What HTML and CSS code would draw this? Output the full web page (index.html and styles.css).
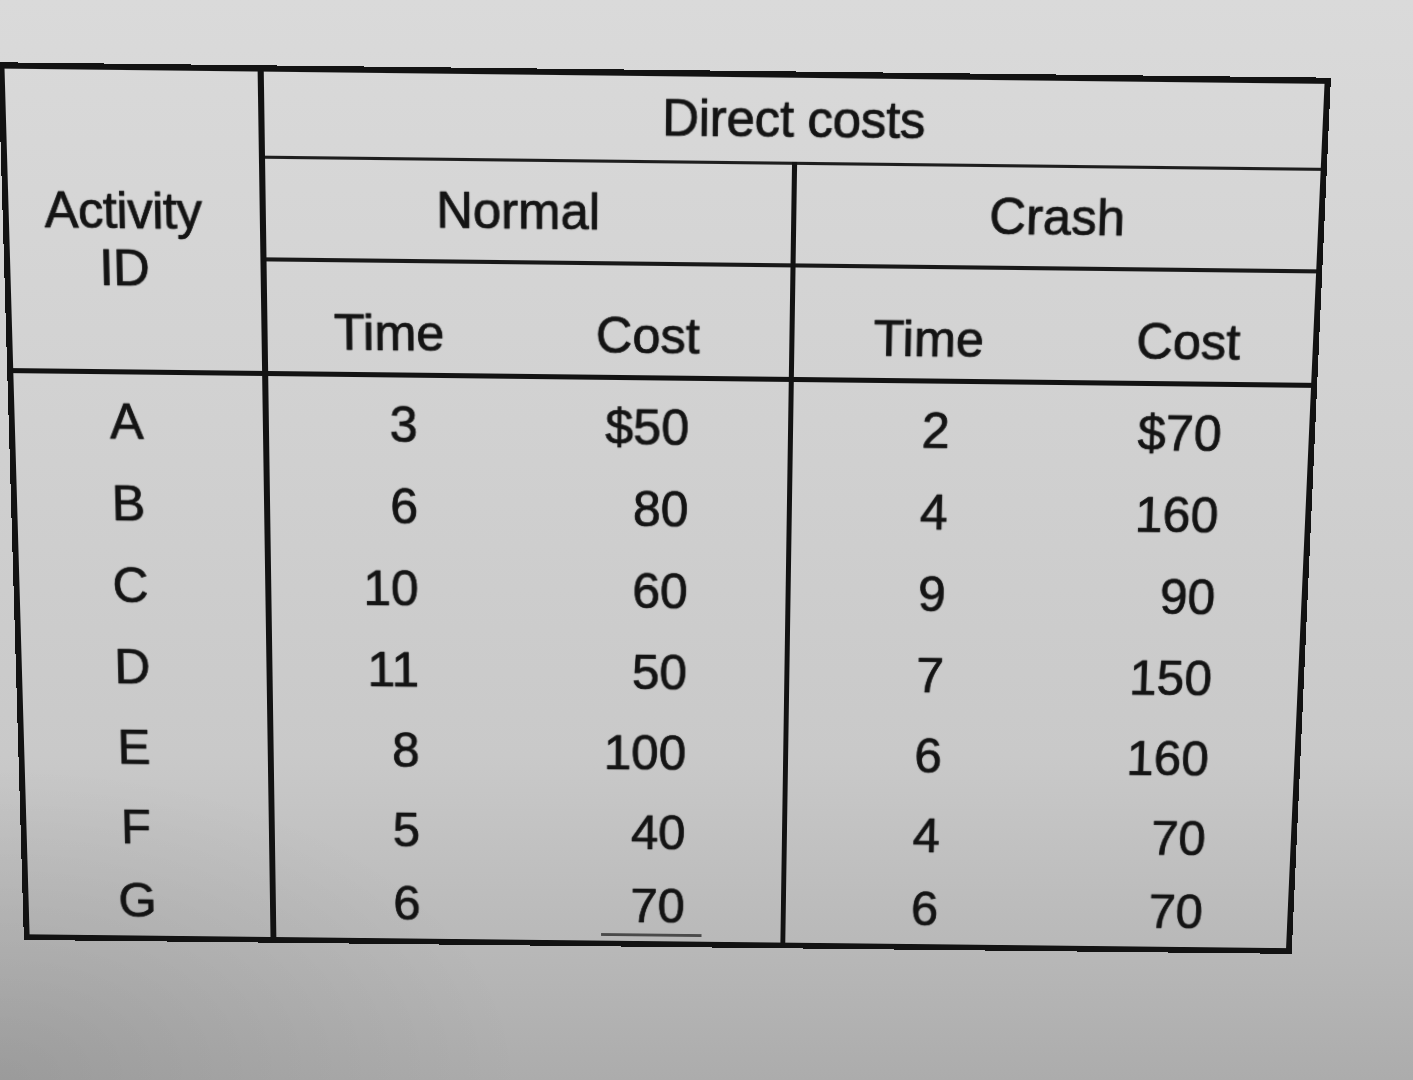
FILE: index.html
```html
<!DOCTYPE html>
<html lang="en">
<head>
<meta charset="utf-8">
<title>Direct costs</title>
<link rel="stylesheet" href="styles.css">
</head>
<body>
<div class="page">
  <table class="costs">
    <colgroup>
      <col class="c-id">
      <col class="c-nt">
      <col class="c-nc">
      <col class="c-ct">
      <col class="c-cc">
    </colgroup>
    <thead>
      <tr class="r1">
        <th class="act" rowspan="3"><span class="act-text">Activity<br>ID</span></th>
        <th class="direct" colspan="4">Direct costs</th>
      </tr>
      <tr class="r2">
        <th class="normal" colspan="2">Normal</th>
        <th class="crash" colspan="2">Crash</th>
      </tr>
      <tr class="r3">
        <th class="h nt">Time</th>
        <th class="h nc">Cost</th>
        <th class="h ct">Time</th>
        <th class="h cc">Cost</th>
      </tr>
    </thead>
    <tbody>
      <tr><td class="id">A</td><td class="nt">3</td><td class="nc">$50</td><td class="ct">2</td><td class="cc">$70</td></tr>
      <tr><td class="id">B</td><td class="nt">6</td><td class="nc">80</td><td class="ct">4</td><td class="cc">160</td></tr>
      <tr><td class="id">C</td><td class="nt">10</td><td class="nc">60</td><td class="ct">9</td><td class="cc">90</td></tr>
      <tr><td class="id">D</td><td class="nt">11</td><td class="nc">50</td><td class="ct">7</td><td class="cc">150</td></tr>
      <tr><td class="id">E</td><td class="nt">8</td><td class="nc">100</td><td class="ct">6</td><td class="cc">160</td></tr>
      <tr><td class="id">F</td><td class="nt">5</td><td class="nc">40</td><td class="ct">4</td><td class="cc">70</td></tr>
      <tr class="last"><td class="id">G</td><td class="nt">6</td><td class="nc"><span class="total">70</span></td><td class="ct">6</td><td class="cc">70</td></tr>
    </tbody>
  </table>
</div>
</body>
</html>
```

FILE: styles.css
```css
html, body {
  margin: 0;
  padding: 0;
}

body {
  width: 1413px;
  height: 1080px;
  overflow: hidden;
  background:
    radial-gradient(ellipse 700px 420px at 0% 100%, rgba(0,0,0,0.10), rgba(0,0,0,0) 75%),
    linear-gradient(180deg, #dadada 0%, #d2d2d2 35%, #c9c9c9 70%, #b8b8b8 88%, #acacac 100%);
  font-family: "Liberation Sans", Arial, Helvetica, sans-serif;
  color: #141414;
}

.page {
  padding: 76px 0 0 11px;
}

.costs {
  width: 1295px;
  table-layout: fixed;
  border-collapse: collapse;
  border: 6px solid #121212;
  transform-origin: 514px 424px;
  transform: perspective(2000px) rotateX(-6.5deg) skewY(0.65deg);
  font-size: 50px;
  line-height: 56px;
  -webkit-text-stroke: 0.7px #1a1a1a;
  text-shadow: 0 0 1.5px rgba(0, 0, 0, 0.55);
}

.c-id { width: 253px; }
.c-nt { width: 266px; }
.c-nc { width: 256px; }
.c-ct { width: 270px; }
.c-cc { width: 250px; }

.costs th,
.costs td {
  padding: 0;
  font-weight: 400;
  white-space: nowrap;
}

.r1 { height: 85px; }
.r2 { height: 100px; }
.r3 { height: 112px; }
.costs tbody tr { height: 83px; }

.act {
  border-right: 6px solid #121212;
  border-bottom: 5px solid #121212;
  vertical-align: middle;
  text-align: center;
  padding: 37px 22px 0 0 !important;
}

.act-text {
  display: inline-block;
  letter-spacing: -0.5px;
}

.direct {
  border-bottom: 3px solid #1e1e1e;
  text-align: center;
  vertical-align: middle;
  letter-spacing: -0.3px;
}

.normal {
  border-right: 5px solid #121212;
  border-bottom: 4px solid #181818;
  text-align: center;
  padding-right: 20px !important;
}

.crash {
  border-bottom: 4px solid #181818;
  text-align: center;
}

.h {
  border-bottom: 5px solid #121212;
  text-align: center;
  padding-top: 30px !important;
}

.h.nt { padding-right: 22px !important; }
.h.nc { padding-right: 26px !important; border-right: 5px solid #121212; }

.costs td {
  padding-top: 14px;
  vertical-align: middle;
}

td.id {
  border-right: 6px solid #121212;
  text-align: center;
  padding-right: 24px;
}

td.nt { text-align: right; padding-right: 115px; }
td.nc { text-align: right; padding-right: 98px; border-right: 5px solid #121212; }
td.ct { text-align: right; padding-right: 111px; }
td.cc { text-align: right; padding-right: 87px; }

.last td {
  padding-top: 6px;
}

.total {
  display: inline-block;
  line-height: 50px;
  padding: 0 17px 4px 30px;
  margin-right: -17px;
  border-bottom: 3px solid #4a4a4a;
  position: relative;
  top: 2px;
}
```
